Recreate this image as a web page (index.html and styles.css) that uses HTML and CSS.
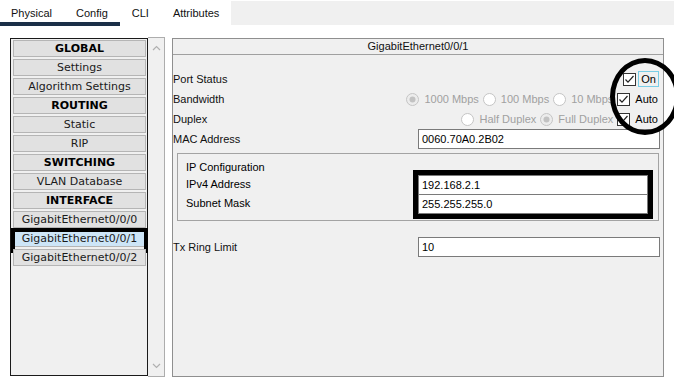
FILE: index.html
```html
<!DOCTYPE html>
<html>
<head>
<meta charset="utf-8">
<link rel="stylesheet" href="styles.css">
</head>
<body>
<div class="tabs">
  <div class="tab-group">
    <span class="tab first">Physical</span>
    <span class="tab">Config</span>
  </div>
  <span class="tab plain">CLI</span>
  <span class="tab plain">Attributes</span>
  <div class="tab-fill"></div>
</div>

<div class="main">
  <div class="sidebar">
    <div class="list">
      <div class="item head">GLOBAL</div>
      <div class="item">Settings</div>
      <div class="item">Algorithm Settings</div>
      <div class="item head">ROUTING</div>
      <div class="item">Static</div>
      <div class="item">RIP</div>
      <div class="item head">SWITCHING</div>
      <div class="item">VLAN Database</div>
      <div class="item head">INTERFACE</div>
      <div class="item">GigabitEthernet0/0/0</div>
      <div class="item selected">GigabitEthernet0/0/1</div>
      <div class="item">GigabitEthernet0/0/2</div>
    </div>
    <div class="scroll">
      <svg class="arrow" width="9" height="6" viewBox="0 0 9 6"><path d="M1 5 L4.5 1.5 L8 5" fill="none" stroke="#b0b0b0" stroke-width="1.2"/></svg>
      <svg class="arrow" width="9" height="6" viewBox="0 0 9 6"><path d="M1 1 L4.5 4.5 L8 1" fill="none" stroke="#b0b0b0" stroke-width="1.2"/></svg>
    </div>
  </div>

  <div class="panel">
    <div class="panel-title">GigabitEthernet0/0/1</div>
    <div class="panel-body">
      <div class="row">
        <span class="label">Port Status</span>
        <div class="controls">
          <svg class="check" width="13" height="13" viewBox="0 0 13 13"><rect x="0.5" y="0.5" width="12" height="12" fill="#fff" stroke="#333"/><path d="M2.5 6.5 L5 9.2 L10.5 3" fill="none" stroke="#222" stroke-width="1.2"/></svg>
          <span class="focus">On</span>
        </div>
      </div>
      <div class="row">
        <span class="label">Bandwidth</span>
        <div class="controls bw">
          <span class="opt dis"><svg width="13" height="13" viewBox="0 0 13 13"><circle cx="6.5" cy="6.5" r="6" fill="#ececec" stroke="#c4c4c4"/><circle cx="6.5" cy="6.5" r="3" fill="#c2c2c2"/></svg>1000 Mbps</span>
          <span class="opt dis"><svg width="13" height="13" viewBox="0 0 13 13"><circle cx="6.5" cy="6.5" r="6" fill="#fff" stroke="#c4c4c4"/></svg>100 Mbps</span>
          <span class="opt dis"><svg width="13" height="13" viewBox="0 0 13 13"><circle cx="6.5" cy="6.5" r="6" fill="#fff" stroke="#c4c4c4"/></svg>10 Mbps</span>
          <span class="opt"><svg width="13" height="13" viewBox="0 0 13 13"><rect x="0.5" y="0.5" width="12" height="12" fill="#fff" stroke="#333"/><path d="M2.5 6.5 L5 9.2 L10.5 3" fill="none" stroke="#222" stroke-width="1.2"/></svg>Auto</span>
        </div>
      </div>
      <div class="row">
        <span class="label">Duplex</span>
        <div class="controls bw">
          <span class="opt dis"><svg width="13" height="13" viewBox="0 0 13 13"><circle cx="6.5" cy="6.5" r="6" fill="#fff" stroke="#c4c4c4"/></svg>Half Duplex</span>
          <span class="opt dis"><svg width="13" height="13" viewBox="0 0 13 13"><circle cx="6.5" cy="6.5" r="6" fill="#ececec" stroke="#c4c4c4"/><circle cx="6.5" cy="6.5" r="3" fill="#c2c2c2"/></svg>Full Duplex</span>
          <span class="opt"><svg width="13" height="13" viewBox="0 0 13 13"><rect x="0.5" y="0.5" width="12" height="12" fill="#fff" stroke="#333"/><path d="M2.5 6.5 L5 9.2 L10.5 3" fill="none" stroke="#222" stroke-width="1.2"/></svg>Auto</span>
        </div>
      </div>
      <div class="row">
        <span class="label wide">MAC Address</span>
        <div class="field">0060.70A0.2B02</div>
      </div>

      <div class="group">
        <div class="group-title">IP Configuration</div>
        <div class="ip-row">
          <div class="ip-labels">
            <div class="ip-label">IPv4 Address</div>
            <div class="ip-label">Subnet Mask</div>
          </div>
          <div class="ip-inputs">
            <div class="ip-field">192.168.2.1</div>
            <div class="ip-field">255.255.255.0</div>
          </div>
        </div>
      </div>

      <div class="row tx">
        <span class="label wide">Tx Ring Limit</span>
        <div class="field">10</div>
      </div>
    </div>
  </div>
</div>

<div class="annot-circle"></div>
</body>
</html>
```

FILE: styles.css
```css
html, body {
  margin: 0;
  padding: 0;
  overflow: hidden;
}

body {
  width: 674px;
  height: 389px;
  background: #ffffff;
  font-family: "Liberation Sans", Arial, sans-serif;
  font-size: 11px;
  color: #000;
  position: relative;
}

/* Tabs */
.tabs {
  display: flex;
  height: 26px;
}

.tab-group {
  display: flex;
  height: 22px;
  border-bottom: 4px solid #1b2f48;
  margin-left: -1px;
}

.tab {
  padding: 5px 12px 0;
  line-height: 17px;
  height: 22px;
  box-sizing: border-box;
  white-space: nowrap;
  color: #111;
}

.tab.plain {
  height: 26px;
  background: #fff;
}

.tab-fill {
  flex: 1;
  height: 24px;
  margin-top: 1px;
  background: #f0f0f0;
}

/* Main */
.main {
  display: flex;
  padding: 12px 0 0 10px;
  gap: 7px;
}

.sidebar {
  display: flex;
  height: 338px;
}

.list {
  width: 138px;
  box-sizing: border-box;
  border: 1px solid #1a1a1a;
  background: #f0f0f0;
  padding: 1px 1px 0 2px;
  display: flex;
  flex-direction: column;
  gap: 2px;
}

.item {
  position: relative;
  height: 17px;
  box-sizing: border-box;
  border: 1px solid #b5b5b5;
  background: #e1e1e1;
  font-family: "DejaVu Sans", Verdana, sans-serif;
  font-size: 11px;
  line-height: 15px;
  text-align: center;
  color: #1a1a1a;
  white-space: nowrap;
}

.item.head {
  font-weight: bold;
  color: #000;
}

.item.selected {
  background: #cde5f7;
}

.item.selected::after {
  content: "";
  position: absolute;
  left: -3px;
  right: -3px;
  top: -3px;
  bottom: -7px;
  border: 4px solid #000;
}

.scroll {
  width: 17px;
  box-sizing: border-box;
  border: 1px solid #adadad;
  border-left: none;
  background: #f0f0f0;
  display: flex;
  flex-direction: column;
  justify-content: space-between;
  align-items: center;
  padding: 7px 0 7px;
  margin-top: -1px;
  height: 340px;
}

.arrow {
  display: block;
}

/* Panel */
.panel {
  width: 492px;
  height: 339px;
  box-sizing: border-box;
  border: 1px solid #8f8f8f;
  background: #f0f0f0;
}

.panel-title {
  height: 15px;
  line-height: 14px;
  text-align: center;
  border-bottom: 1px solid #a0a0a0;
  color: #111;
}

.panel-body {
  padding-top: 14px;
}

.row {
  display: flex;
  align-items: center;
  height: 20px;
}

.label {
  flex: 0 0 auto;
  color: #111;
}

.label.wide {
  flex: 0 0 245px;
}

.controls {
  margin-left: auto;
  display: flex;
  align-items: center;
  padding-right: 4px;
  gap: 2px;
}

.controls svg {
  display: block;
  flex: none;
}

.focus {
  border: 1px solid #79cde6;
  padding: 0 2px;
  line-height: 14px;
  height: 16px;
  box-sizing: border-box;
}

.controls.bw {
  gap: 4px;
  padding-right: 5px;
}

.opt {
  display: flex;
  align-items: center;
  gap: 5px;
  white-space: nowrap;
}

.opt.dis {
  color: #a0a0a0;
}

.field {
  width: 242px;
  height: 20px;
  box-sizing: border-box;
  border: 1px solid #7a7a7a;
  background: #fff;
  padding-left: 3px;
  line-height: 18px;
}

.group {
  margin: 4px 4px 0;
  border: 1px solid #a3a3a3;
  padding: 6px 10px 6px 8px;
}

.group-title {
  line-height: 14px;
  margin-bottom: 1px;
}

.ip-row {
  display: flex;
}

.ip-labels {
  flex: 0 0 232px;
}

.ip-label {
  height: 19px;
  line-height: 19px;
}

.ip-inputs {
  width: 230px;
  outline: 5px solid #000;
}

.ip-field {
  height: 20px;
  box-sizing: border-box;
  border: 1px solid #7a7a7a;
  background: #fff;
  padding-left: 3px;
  line-height: 18px;
}

.ip-field + .ip-field {
  margin-top: -1px;
}

.row.tx {
  margin-top: 16px;
}

/* Annotation */
.annot-circle {
  position: absolute;
  left: 610px;
  top: 58px;
  width: 70px;
  height: 77px;
  box-sizing: border-box;
  border: 5px solid #000;
  border-radius: 50%;
}
```
